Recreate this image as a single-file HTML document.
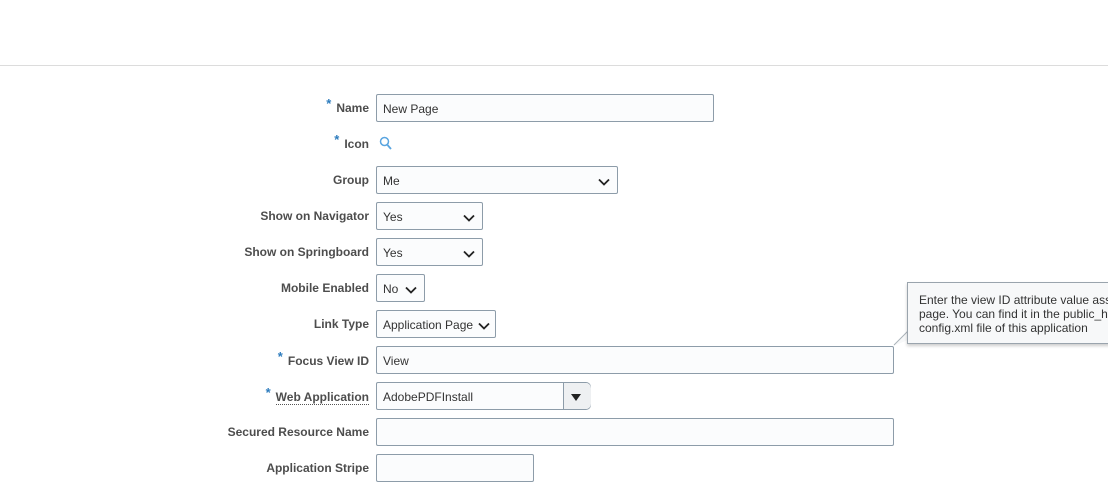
<!DOCTYPE html><html><head><style>
body{margin:0;width:1108px;height:477px;overflow:hidden;background:#fff;font-family:"Liberation Sans",Arial,sans-serif;position:relative}
.hr{position:absolute;left:0;right:0;top:65px;border-top:1px solid #dcdcdc}
.l{position:absolute;right:739px;font-size:12px;font-weight:bold;color:#4d4d4d;text-align:right;white-space:nowrap}
.l i{font-style:normal;color:#2c7bbd;font-size:13px;position:relative;top:-4px;margin-right:5px}
.f{position:absolute;left:376px;height:26px;border:1px solid #8d9ca9;border-radius:2px;background:#fbfcfd;box-sizing:border-box;font-size:12px;color:#333;line-height:26px;padding-left:6px}
.f svg{position:absolute;right:5px;top:8px}
.tip{position:absolute;left:907px;top:282px;width:220px;height:62px;border:1px solid #9aa4ad;background:#f7f8f9;box-shadow:0 2px 3px rgba(0,0,0,.2);font-size:12px;color:#333;line-height:14px;padding:10px 0 0 11px;box-sizing:border-box;white-space:nowrap;overflow:hidden}
</style></head><body>
<div class="hr"></div>
<div class="l" style="top:100px"><i>*</i>Name</div>
<div class="f" style="top:94px;width:338px;height:28px;line-height:28px">New Page</div>
<div class="l" style="top:136px"><i>*</i>Icon</div>
<svg style="position:absolute;left:379px;top:136px" width="14" height="16" viewBox="0 0 14 16"><circle cx="5.5" cy="5.5" r="4" fill="none" stroke="#5aa5e0" stroke-width="1.5"/><path d="M8.5 9 L12 13" stroke="#5aa5e0" stroke-width="1.8"/></svg>
<div class="l" style="top:173px">Group</div>
<div class="f" style="top:166px;width:242px;height:28px;line-height:28px">Me<svg width="14" height="10" viewBox="0 0 14 10" style="right:6px;top:10px"><path d="M2 2.5l5 5 5-5" fill="none" stroke="#222" stroke-width="1.8"/></svg></div>
<div class="l" style="top:209px">Show on Navigator</div>
<div class="f" style="top:202px;width:107px;height:28px;line-height:28px">Yes<svg width="14" height="10" viewBox="0 0 14 10" style="right:6px;top:10px"><path d="M2 2.5l5 5 5-5" fill="none" stroke="#222" stroke-width="1.8"/></svg></div>
<div class="l" style="top:245px">Show on Springboard</div>
<div class="f" style="top:238px;width:107px;height:28px;line-height:28px">Yes<svg width="14" height="10" viewBox="0 0 14 10" style="right:6px;top:10px"><path d="M2 2.5l5 5 5-5" fill="none" stroke="#222" stroke-width="1.8"/></svg></div>
<div class="l" style="top:281px">Mobile Enabled</div>
<div class="f" style="top:274px;width:49px;height:28px;line-height:28px">No<svg width="14" height="10" viewBox="0 0 14 10" style="right:6px;top:10px"><path d="M2 2.5l5 5 5-5" fill="none" stroke="#222" stroke-width="1.8"/></svg></div>
<div class="l" style="top:317px">Link Type</div>
<div class="f" style="top:310px;width:120px;height:28px;line-height:28px">Application Page<svg width="14" height="10" viewBox="0 0 14 10" style="right:4px;top:10px"><path d="M2 2.5l5 5 5-5" fill="none" stroke="#222" stroke-width="1.8"/></svg></div>
<div class="l" style="top:353px"><i>*</i>Focus View ID</div>
<div class="f" style="top:346px;width:518px;height:28px;line-height:28px">View</div>
<svg style="position:absolute;left:893px;top:330px" width="16" height="16"><path d="M0 16 L15 0 L15 10 Z" fill="#f7f8f9"/><path d="M1 15 L15 1" stroke="#aab2b9"/></svg>
<div class="tip">Enter the view ID attribute value associated with this<br>page. You can find it in the public_html/WEB-INF/adf-<br>config.xml file of this application</div>
<div class="l" style="top:389px"><i>*</i><span style="border-bottom:1px dotted #555">Web Application</span></div>
<div class="f" style="top:382px;width:215px;height:28px;line-height:28px;border-radius:2px 5px 5px 2px">AdobePDFInstall<div style="position:absolute;left:186px;top:0;width:27px;height:26px;border-left:1px solid #8d9ca9;background:#eef0f2;border-radius:0 5px 5px 0"></div><svg width="10" height="8" viewBox="0 0 10 8" style="right:9px;top:11px"><path d="M0 0h10L5 7z" fill="#222"/></svg></div>
<div class="l" style="top:425px">Secured Resource Name</div>
<div class="f" style="top:418px;width:518px;height:28px"></div>
<div class="l" style="top:461px">Application Stripe</div>
<div class="f" style="top:454px;width:158px;height:28px"></div>
</body></html>
